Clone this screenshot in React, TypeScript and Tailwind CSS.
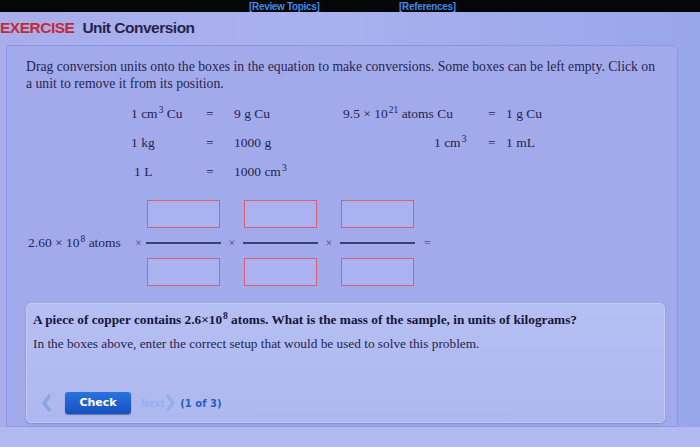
import React from 'react';

const serif = "font-['Liberation_Serif',serif]";

const Box: React.FC = () => (
    <div className="w-[73px] h-[28px] border-[1.5px] border-[#d6606e] bg-[#aab2f1]" />
);

const Fraction: React.FC = () => (
    <div className="flex flex-col items-center">
        <Box />
        <div className="w-[75px] h-[2px] bg-[#3b4170] mt-[14px] mb-[14px]" />
        <Box />
    </div>
);

const Sup: React.FC<{ children: React.ReactNode }> = ({ children }) => (
    <span className="text-[9.5px] relative -top-[5px] ml-[1px]">{children}</span>
);

const App: React.FC = () => {
    return (
        <div className="w-[700px] h-[447px] overflow-hidden bg-gradient-to-r from-[#a9aeea] via-[#a8b0ee] to-[#98a6ea] flex flex-col">
            {/* top bar */}
            <div className="h-[12px] bg-[#050608] flex items-end font-['Liberation_Sans',sans-serif] text-[11px] font-bold leading-[11px] text-[#3b8de6] tracking-[-0.3px]">
                <span className="ml-[249px] scale-x-90 origin-left">[Review Topics]</span>
                <span className="ml-[72px] scale-x-90 origin-left">[References]</span>
            </div>

            {/* title */}
            <div className="h-[33px] flex items-center font-['Liberation_Sans',sans-serif] text-[15.5px] font-bold tracking-[-0.5px] pb-[2px]">
                <span className="text-[#c42a35]">EXERCISE</span>
                <span className="ml-[8px] text-[#24244c]">Unit Conversion</span>
            </div>

            {/* outer panel */}
            <div className={`ml-[6px] mr-[22px] h-[382px] border border-[#8f97dc] rounded-tr-[6px] bg-[#a3aaec] pl-[19px] ${serif} text-[#23254e]`}>
                <p className="mt-[12px] w-[636px] text-[13.7px] leading-[17px]">
                    Drag conversion units onto the boxes in the equation to make conversions. Some boxes can be left empty. Click on a unit to remove it from its position.
                </p>

                {/* conversion table */}
                <div className="mt-[13px] ml-[105px] flex flex-col gap-[10px] text-[13.5px] leading-[18px]">
                    <div className="flex">
                        <span className="w-[75px]">1 cm<Sup>3</Sup> Cu</span>
                        <span className="w-[28px]">=</span>
                        <span className="w-[109px]">9 g Cu</span>
                        <span className="w-[145px]">9.5 × 10<Sup>21</Sup> atoms Cu</span>
                        <span className="w-[18px]">=</span>
                        <span>1 g Cu</span>
                    </div>
                    <div className="flex">
                        <span className="w-[75px]">1 kg</span>
                        <span className="w-[28px]">=</span>
                        <span className="w-[109px]">1000 g</span>
                        <span className="w-[145px] pl-[91px]">1 cm<Sup>3</Sup></span>
                        <span className="w-[18px]">=</span>
                        <span>1 mL</span>
                    </div>
                    <div className="flex">
                        <span className="w-[75px] pl-[3px]">1 L</span>
                        <span className="w-[28px]">=</span>
                        <span className="w-[109px]">1000 cm<Sup>3</Sup></span>
                    </div>
                </div>

                {/* equation */}
                <div className="mt-[18px] flex items-center text-[13.5px]">
                    <span className="ml-[2px] w-[107px]">2.60 × 10<Sup>8</Sup> atoms</span>
                    <span className="w-[11px] text-[12px] text-[#4a4f80]">×</span>
                    <Fraction />
                    <span className="w-[22px] text-center text-[12px] text-[#4a4f80]">×</span>
                    <Fraction />
                    <span className="w-[22px] text-center text-[12px] text-[#4a4f80]">×</span>
                    <Fraction />
                    <span className="ml-[9px] text-[12px] text-[#4a4f80]">=</span>
                </div>

                {/* question panel */}
                <div className="mt-[17px] mr-[12px] h-[120px] rounded-[5px] border border-[#c3caf3] bg-gradient-to-b from-[#b6bff3] to-[#aeb8f0] shadow-[0_1px_2px_rgba(60,70,140,0.35)] px-[6px] pt-[7px] flex flex-col">
                    <p className="text-[13.3px] font-bold leading-[18px] text-[#15173a]">
                        A piece of copper contains 2.6×10<Sup>8</Sup> atoms. What is the mass of the sample, in units of kilograms?
                    </p>
                    <p className="mt-[5px] text-[13.3px] leading-[17px] text-[#23254e]">
                        In the boxes above, enter the correct setup that would be used to solve this problem.
                    </p>

                    <div className="mt-auto mb-[8px] flex items-center font-['DejaVu_Sans',sans-serif]">
                        <svg width="12" height="20" viewBox="0 0 12 20" className="ml-[8px]">
                            <path d="M9 2 L3 10 L9 18" stroke="#8aa6e2" strokeWidth="3.5" fill="none" />
                        </svg>
                        <button className="ml-[12px] w-[66px] h-[22px] rounded-[3px] bg-gradient-to-b from-[#2a73de] to-[#1551bf] text-white text-[11px] font-bold shadow-[0_1px_1px_rgba(0,0,40,0.4)]">
                            Check
                        </button>
                        <span className="ml-[10px] text-[10px] text-[#8eaaec]">Next</span>
                        <svg width="10" height="20" viewBox="0 0 10 20" className="ml-[1px]">
                            <path d="M2 2 L8 10 L2 18" stroke="#8fb0ea" strokeWidth="3.5" fill="none" />
                        </svg>
                        <span className="ml-[5px] text-[10px] font-bold text-[#2a5cbd]">(1 of 3)</span>
                    </div>
                </div>
            </div>

            <div className="flex-1 bg-[#b3baf2]" />
        </div>
    );
};

export default App;
